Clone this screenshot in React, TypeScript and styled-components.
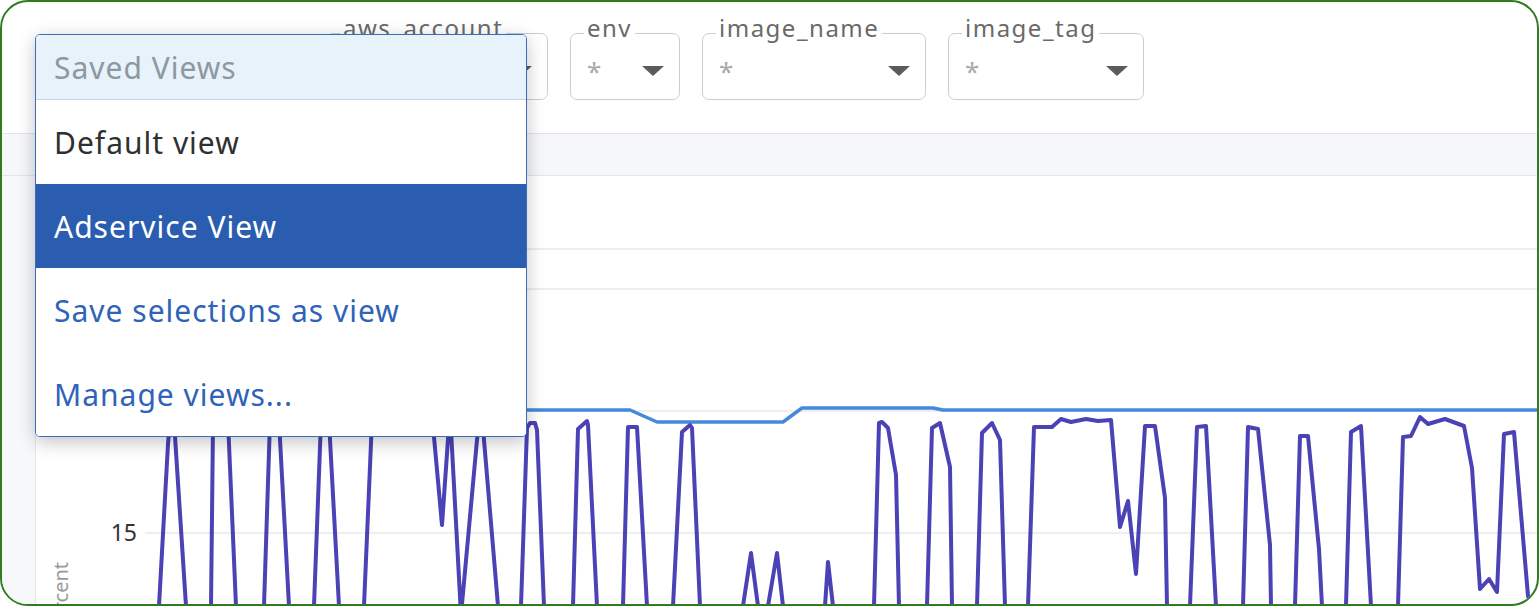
import React from "react";
import styled, { createGlobalStyle } from "styled-components";

const GlobalStyle = createGlobalStyle`
  html, body {
    margin: 0;
    padding: 0;
    background: #ffffff;
  }
  body {
    font-family: "Noto Sans", "Open Sans", sans-serif;
  }
`;

type Filter = { label: string; width: number };

const filters: Filter[] = [
  { label: "aws_account", width: 222 },
  { label: "env", width: 110 },
  { label: "image_name", width: 224 },
  { label: "image_tag", width: 196 },
];

type MenuKind = "plain" | "active" | "link";

const menuItems: { label: string; kind: MenuKind }[] = [
  { label: "Default view", kind: "plain" },
  { label: "Adservice View", kind: "active" },
  { label: "Save selections as view", kind: "link" },
  { label: "Manage views...", kind: "link" },
];

// cpu series, page coordinates
const cpu: [number, number][] = [
  [150, 640], [159, 606], [168, 444], [170, 421], [174, 421], [186, 606], [198, 640],
  [211, 606], [213, 425], [219, 418], [228, 421], [236, 606], [250, 640],
  [264, 606], [270, 421], [279, 421], [289, 606], [300, 640],
  [314, 606], [321, 421], [329, 421], [339, 606], [350, 640],
  [364, 606], [372, 420], [380, 418], [400, 420], [420, 419], [432, 421],
  [434, 437], [442, 525], [449, 425], [451, 430], [461, 615],
  [477, 440], [479, 423], [483, 423], [484, 440], [498, 606], [510, 640],
  [521, 606], [527, 428], [530, 423], [535, 423], [537, 430], [544, 606], [558, 640],
  [573, 606], [578, 429], [587, 421], [588, 425], [597, 606], [610, 640],
  [623, 606], [628, 427], [637, 427], [647, 606], [660, 640],
  [673, 606], [682, 432], [690, 425], [692, 428], [700, 606], [720, 650],
  [743, 606], [751, 553], [758, 606], [763, 630], [768, 606], [777, 553], [783, 606],
  [800, 650], [825, 606], [828, 562], [833, 606], [850, 650],
  [874, 606], [879, 423], [882, 422], [888, 428], [896, 475], [899, 606], [912, 640],
  [927, 606], [932, 428], [940, 423], [950, 467], [952, 606], [965, 640],
  [977, 606], [982, 433], [992, 423], [1000, 440], [1005, 606], [1016, 640],
  [1028, 606], [1034, 427], [1052, 427], [1061, 419], [1071, 422], [1086, 419],
  [1098, 421], [1111, 420], [1120, 527], [1128, 501], [1136, 574], [1145, 426],
  [1155, 426], [1165, 498], [1167, 606], [1178, 640],
  [1190, 606], [1197, 427], [1206, 426], [1216, 606], [1230, 640],
  [1243, 606], [1248, 427], [1258, 429], [1270, 545], [1271, 606], [1283, 640],
  [1295, 606], [1300, 436], [1308, 436], [1319, 549], [1322, 606], [1334, 640],
  [1346, 606], [1351, 432], [1361, 426], [1371, 606], [1385, 640],
  [1398, 606], [1403, 437], [1411, 436], [1420, 417], [1428, 424], [1445, 419],
  [1464, 426], [1472, 468], [1480, 589], [1489, 579], [1497, 592], [1504, 434],
  [1514, 432], [1528, 596], [1532, 606], [1540, 640],
];

const limit: [number, number][] = [
  [145, 410], [630, 410], [657, 422], [783, 422], [802, 408], [933, 408],
  [943, 410], [1540, 410],
];

const gridLines = [249, 289, 411, 533];

const toPoints = (pts: [number, number][]) => pts.map((p) => p.join(",")).join(" ");

const Frame = styled.div`
  position: relative;
  box-sizing: border-box;
  width: 1539px;
  height: 606px;
  border: 2px solid #2e7d1f;
  border-radius: 28px;
  overflow: hidden;
  background: #fff;
  display: flex;
  flex-direction: column;
`;

const FilterBar = styled.div`
  flex: none;
  box-sizing: border-box;
  height: 131px;
  display: flex;
  align-items: flex-start;
  gap: 22px;
  padding: 14px 0 0 324px;
`;

const FilterBox = styled.fieldset<{ $w: number }>`
  box-sizing: border-box;
  width: ${(p) => p.$w}px;
  height: 84px;
  margin: 0;
  padding: 0 15.5px 8px 16px;
  border: 1.5px solid #c9cdd4;
  border-radius: 7px;
  display: flex;
  align-items: center;
  justify-content: space-between;
`;

const Legend = styled.legend`
  margin-left: -3px;
  padding: 0 3px 10px;
  font-size: 24px;
  line-height: 24px;
  letter-spacing: 1.5px;
  color: #6a6a6a;
`;

const Star = styled.span`
  font-size: 26px;
  line-height: 1;
  color: #a9a9a9;
`;

const Caret = styled.span`
  width: 0;
  height: 0;
  border-left: 11px solid transparent;
  border-right: 11px solid transparent;
  border-top: 10px solid #5b5b5b;
`;

const Band = styled.div`
  flex: none;
  height: 41px;
  background: #f6f7f9;
  border-top: 1px solid #e3e5e9;
  border-bottom: 1px solid #e3e5e9;
`;

const ChartArea = styled.div`
  flex: 1;
  min-height: 0;
  display: flex;
`;

const LeftStrip = styled.div`
  flex: none;
  width: 33px;
  background: #f7f8fa;
  border-right: 1px solid #e4e6ea;
`;

const Plot = styled.div`
  flex: 1;
  min-width: 0;
  overflow: hidden;
`;

const ChartSvg = styled.svg`
  display: block;
  width: 1501px;
  height: 428px;
  font-family: "Noto Sans", "Open Sans", sans-serif;
`;

const Menu = styled.div`
  position: absolute;
  left: 33px;
  top: 32px;
  box-sizing: border-box;
  width: 492px;
  background: #fff;
  border: 1.5px solid #3b6cc0;
  border-radius: 5px;
  overflow: hidden;
  box-shadow: 0 5px 18px rgba(0, 0, 0, 0.24);
  font-size: 30px;
  letter-spacing: 1px;
`;

const MenuHeader = styled.div`
  box-sizing: border-box;
  height: 65px;
  display: flex;
  align-items: center;
  padding-left: 18px;
  background: #e8f2fb;
  border-bottom: 1px solid #c3d5ec;
  color: #8d989f;
`;

const MenuRow = styled.div<{ $kind: MenuKind }>`
  height: 84px;
  display: flex;
  align-items: center;
  padding-left: 18px;
  color: ${(p) => (p.$kind === "active" ? "#ffffff" : p.$kind === "link" ? "#2f63b8" : "#303030")};
  background: ${(p) => (p.$kind === "active" ? "#2a5db0" : "#ffffff")};
`;

export default function App() {
  return (
    <>
      <GlobalStyle />
      <Frame>
        <FilterBar>
          {filters.map((f) => (
            <FilterBox key={f.label} $w={f.width}>
              <Legend>{f.label}</Legend>
              <Star>*</Star>
              <Caret />
            </FilterBox>
          ))}
        </FilterBar>
        <Band />
        <ChartArea>
          <LeftStrip />
          <Plot>
            <ChartSvg viewBox="36 176 1501 428">
              {gridLines.map((y) => (
                <line key={y} x1={145} x2={1540} y1={y} y2={y} stroke="#e7e8eb" strokeWidth={1.5} />
              ))}
              <text x={137} y={541} textAnchor="end" fontSize={23} fill="#333">
                15
              </text>
              <text transform="translate(68,562) rotate(-90)" textAnchor="end" fontSize={20} fill="#9a9a9a">
                percent
              </text>
              <polyline
                points={toPoints(limit)}
                fill="none"
                stroke="#4589dc"
                strokeWidth={3.5}
                strokeLinejoin="round"
              />
              <polyline
                points={toPoints(cpu)}
                fill="none"
                stroke="#4a42b5"
                strokeWidth={4}
                strokeLinejoin="round"
              />
            </ChartSvg>
          </Plot>
        </ChartArea>
        <Menu>
          <MenuHeader>Saved Views</MenuHeader>
          {menuItems.map((m) => (
            <MenuRow key={m.label} $kind={m.kind}>
              {m.label}
            </MenuRow>
          ))}
        </Menu>
      </Frame>
    </>
  );
}
